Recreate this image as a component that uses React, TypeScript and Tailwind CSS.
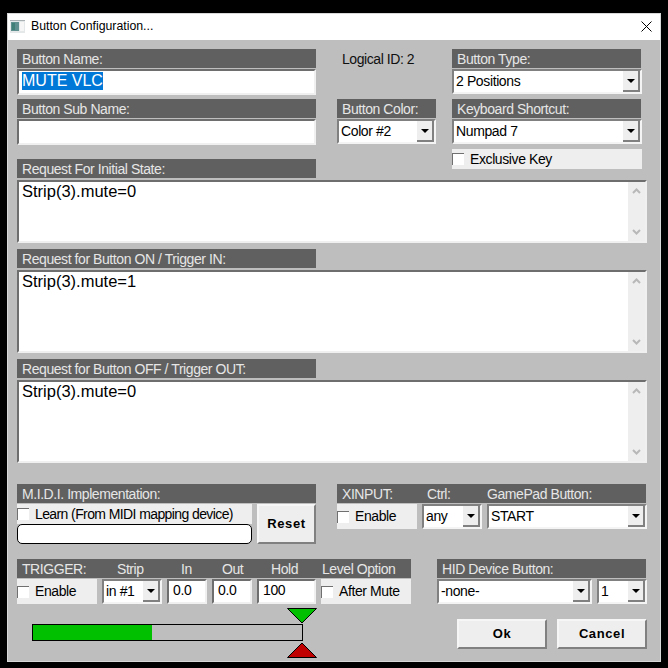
import React from "react";

function Header({ children, className = "" }: { children?: React.ReactNode; className?: string }) {
  return (
    <div className={`h-[19px] bg-[#606060] text-[#e6e6e6] text-[14px] tracking-[-0.43px] leading-[21px] pl-[5px] whitespace-nowrap ${className}`}>
      {children}
    </div>
  );
}

function Sunken({ className = "", children }: { className?: string; children?: React.ReactNode }) {
  return (
    <div className={`border-2 border-t-[#6e6e6e] border-l-[#6e6e6e] border-r-[#f0f0f0] border-b-[#f0f0f0] bg-white ${className}`}>
      {children}
    </div>
  );
}

function Select({ value, className = "" }: { value: string; className?: string }) {
  return (
    <div className={`h-[25px] flex bg-white border-2 border-t-[#808080] border-l-[#808080] border-r-[#f4f4f4] border-b-[#f4f4f4] ${className}`}>
      <div className="flex-1 min-w-0 pl-[2px] text-[14px] tracking-[-0.38px] leading-[21px] text-black whitespace-nowrap overflow-hidden">{value}</div>
      <div className="w-[17px] h-[21px] bg-[#eeeeee] border-r-2 border-b-2 border-[#808080] flex items-center justify-center">
        <svg width="8" height="4" viewBox="0 0 8 4"><path d="M0 0h8L4 4z" fill="#000" /></svg>
      </div>
    </div>
  );
}

function Check({ label, className = "", labelClass = "tracking-[-0.4px]" }: { label: string; className?: string; labelClass?: string }) {
  return (
    <div className={`bg-[#eeeeee] flex items-center text-[14px] text-black whitespace-nowrap ${className}`}>
      <div className="w-[12px] h-[12px] shrink-0 bg-white border-t border-l border-[#707070]" />
      <span className={`ml-[6px] ${labelClass}`}>{label}</span>
    </div>
  );
}

function Field({ value, className = "" }: { value: string; className?: string }) {
  return (
    <Sunken className={`h-[25px] pl-[4px] text-[14px] tracking-[-0.38px] leading-[18px] text-black ${className}`}>{value}</Sunken>
  );
}

function Request({ title, value, className = "" }: { title: string; value: string; className?: string }) {
  return (
    <div className="flex flex-col">
      <Header className="w-[299px]">{title}</Header>
      <div className={`mt-[2px] w-[630px] flex bg-white border-2 border-t-[#6e6e6e] border-l-[#6e6e6e] border-r-[#f0f0f0] border-b-[#f0f0f0] ${className}`}>
        <div className="flex-1 pl-[3px] text-[16.5px] leading-[18px] text-black">{value}</div>
        <div className="w-[17px] bg-[#eeeeee] flex flex-col justify-between items-center py-[6px]">
          <svg width="9" height="6" viewBox="0 0 9 6"><path d="M1 5l3.5-3.5L8 5" fill="none" stroke="#b8b8b8" strokeWidth="2" /></svg>
          <svg width="9" height="6" viewBox="0 0 9 6"><path d="M1 1l3.5 3.5L8 1" fill="none" stroke="#b8b8b8" strokeWidth="2" /></svg>
        </div>
      </div>
    </div>
  );
}

function PushButton({ label, className = "" }: { label: string; className?: string }) {
  return (
    <div className={`bg-[#eeeeee] border-2 border-t-[#f6f6f6] border-l-[#f6f6f6] border-r-[#808080] border-b-[#808080] flex items-center justify-center text-[13px] font-bold tracking-[0.6px] text-black ${className}`}>
      {label}
    </div>
  );
}

export default function App() {
  return (
    <div className="w-[668px] h-[668px] bg-black pt-[13px] pl-[7px] font-['Liberation_Sans',Arial,sans-serif]">
      <div className="w-[654px] h-[649px] bg-white border border-[#d8d8d8] flex flex-col">
        {/* Title bar */}
        <div className="h-[26px] shrink-0 bg-white flex items-center pl-[2px] pr-[8px] pb-[2px]">
          <svg width="15" height="13" viewBox="0 0 15 13" className="shrink-0">
            <rect x="0" y="0" width="15" height="13" fill="#e4e8e8" />
            <rect x="1" y="2" width="8" height="9" fill="#5f8f8f" />
            <rect x="2" y="3" width="3" height="7" fill="#3f7f78" />
            <rect x="10" y="2" width="4" height="9" fill="#f6f6f6" />
            <rect x="0" y="0" width="15" height="1" fill="#a8b0b4" />
          </svg>
          <div className="ml-[6px] text-[12.3px] text-black flex-1">Button Configuration...</div>
          <svg width="11" height="11" viewBox="0 0 11 11"><path d="M.5.5l10 10M10.5.5l-10 10" stroke="#000" strokeWidth="1" fill="none" /></svg>
        </div>

        {/* Body */}
        <div className="flex-1 bg-[#bebebe] pl-[9px] pt-[9px]">
          {/* Top block */}
          <div className="flex h-[110px]">
            <div className="w-[299px] flex flex-col">
              <Header>Button Name:</Header>
              <Sunken className="mt-[1px] h-[26px] pl-[3px] pt-[1px]">
                <div className="inline-block bg-[#0078d7] text-white text-[16px] leading-[18px] align-top">MUTE VLC</div>
              </Sunken>
              <Header className="mt-[4px]">Button Sub Name:</Header>
              <Sunken className="mt-[1px] h-[26px]" />
            </div>
            <div className="ml-[21px] w-[99px] flex flex-col">
              <div className="h-[19px] pl-[5px] text-[14px] tracking-[-0.43px] leading-[21px] text-[#101010] whitespace-nowrap">Logical ID: 2</div>
              <Header className="mt-[31px]">Button Color:</Header>
              <Select value="Color #2" className="mt-[1px]" />
            </div>
            <div className="ml-[16px] w-[190px] flex flex-col">
              <Header className="w-[189px]">Button Type:</Header>
              <Select value="2 Positions" className="mt-[1px]" />
              <Header className="mt-[5px] w-[189px]">Keyboard Shortcut:</Header>
              <Select value="Numpad 7" className="mt-[1px]" />
              <Check label="Exclusive Key" className="mt-[5px] h-[20px]" />
            </div>
          </div>

          {/* Requests */}
          <Request title="Request For Initial State:" value="Strip(3).mute=0" className="h-[63px]" />
          <div className="mt-[6px]">
            <Request title="Request for Button ON / Trigger IN:" value="Strip(3).mute=1" className="h-[83px]" />
          </div>
          <div className="mt-[6px]">
            <Request title="Request for Button OFF / Trigger OUT:" value="Strip(3).mute=0" className="h-[83px]" />
          </div>

          {/* MIDI + XINPUT */}
          <div className="mt-[21px] flex h-[60px]">
            <div className="w-[299px]">
              <Header>M.I.D.I. Implementation:</Header>
              <div className="flex mt-[1px]">
                <div className="w-[235px] flex flex-col">
                  <Check label="Learn (From MIDI mapping device)" className="h-[20px]" labelClass="tracking-[-0.6px]" />
                  <div className="h-[20px] bg-white border border-black rounded-[5px]" />
                </div>
                <PushButton label="Reset" className="ml-[5px] w-[59px] h-[40px]" />
              </div>
            </div>
            <div className="ml-[21px] w-[310px]">
              <Header className="w-[309px] flex">
                <span className="w-[85px]">XINPUT:</span>
                <span className="w-[60px]">Ctrl:</span>
                <span>GamePad Button:</span>
              </Header>
              <div className="flex mt-[1px]">
                <Check label="Enable" className="w-[80px] h-[25px]" />
                <Select value="any" className="ml-[5px] w-[60px]" />
                <Select value="START" className="ml-[5px] w-[160px]" />
              </div>
            </div>
          </div>

          {/* TRIGGER + HID */}
          <div className="mt-[15px] flex h-[45px]">
            <div className="w-[395px]">
              <Header className="w-[394px] flex">
                <span className="w-[95px]">TRIGGER:</span>
                <span className="w-[64px]">Strip</span>
                <span className="w-[41px]">In</span>
                <span className="w-[49px]">Out</span>
                <span className="w-[51px]">Hold</span>
                <span>Level Option</span>
              </Header>
              <div className="flex mt-[1px]">
                <Check label="Enable" className="w-[80px] h-[25px]" />
                <Select value="in #1" className="ml-[5px] w-[60px]" />
                <Field value="0.0" className="ml-[5px] w-[40px]" />
                <Field value="0.0" className="ml-[5px] w-[40px]" />
                <Field value="100" className="ml-[5px] w-[59px]" />
                <Check label="After Mute" className="ml-[5px] w-[90px] h-[25px]" />
              </div>
            </div>
            <div className="ml-[25px] w-[210px]">
              <Header className="w-[209px]">HID Device Button:</Header>
              <div className="flex mt-[1px]">
                <Select value="-none-" className="w-[155px]" />
                <Select value="1" className="ml-[5px] w-[50px]" />
              </div>
            </div>
          </div>

          {/* Meter + buttons */}
          <div className="mt-[4px] flex">
            <div className="relative w-[299px] h-[50px]">
              <div className="absolute left-[15px] top-[16px] w-[271px] h-[17px] border border-black flex">
                <div className="w-[119px] bg-[#00c000]" />
              </div>
              <svg width="30" height="16" viewBox="0 0 30 16" className="absolute left-[270px] top-0">
                <path d="M.5.5h29L15 15z" fill="#00c000" stroke="#000" strokeWidth="1" />
              </svg>
              <svg width="30" height="16" viewBox="0 0 30 16" className="absolute left-[270px] top-[34px]">
                <path d="M.5 15.5h29L15 1z" fill="#c00000" stroke="#000" strokeWidth="1" />
              </svg>
            </div>
            <div className="ml-[141px] mt-[11px] flex">
              <PushButton label="Ok" className="w-[90px] h-[30px]" />
              <PushButton label="Cancel" className="ml-[10px] w-[90px] h-[30px]" />
            </div>
          </div>
        </div>
      </div>
    </div>
  );
}
